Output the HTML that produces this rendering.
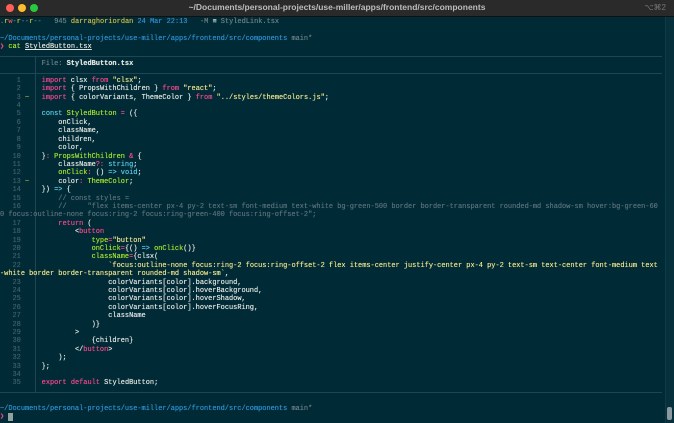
<!DOCTYPE html>
<html><head><meta charset="utf-8"><style>
html,body{margin:0;padding:0;background:#002b36;width:674px;height:423px;overflow:hidden}
#tb{position:absolute;left:0;top:0;width:674px;height:16px;background:#2a2a2a;border-bottom:1px solid #111}
.dot{position:absolute;top:4px;width:8px;height:8px;border-radius:50%}
#title{position:absolute;left:0;width:674px;top:2px;text-align:center;font:bold 8.5px "Liberation Sans",sans-serif;color:#bdbdbd}
#kb{position:absolute;right:8px;top:3px;font:8px "Liberation Sans","DejaVu Sans",sans-serif;color:#777}
pre{position:absolute;left:0;top:18px;margin:0;font-family:"Liberation Mono","DejaVu Sans Mono",monospace;font-size:6.95px;line-height:8.4px;color:#e2e6e2;white-space:pre;text-shadow:0 0 0.4px currentColor}
.hl{position:absolute;left:0;width:662px;height:1px;background:#1f4652}
.vl{position:absolute;left:35px;width:1px;background:#1f4652}
#sb{position:absolute;left:665px;top:17px;width:9px;height:406px;background:#06313c;border-left:1px solid #0e3a45}
#thumb{position:absolute;left:667px;top:407px;width:5px;height:13px;background:#8a9aa0;border-radius:2px}
.k{color:#f0468a}.s{color:#eee28a}.c{color:#5cc8e6}.g{color:#a6e22e}.cm{color:#587079}.n{color:#3d5d68}.m{color:#a8a830}
.b{color:#2f8fd0}.gr{color:#6b7f86}.y{color:#c9b640}.r{color:#e05050}
</style></head><body>
<div id="tb">
<div class="dot" style="left:6px;background:#fe5f57"></div>
<div class="dot" style="left:18px;background:#febc2e"></div>
<div class="dot" style="left:30px;background:#28c840"></div>
<div id="title">~/Documents/personal-projects/use-miller/apps/frontend/src/components</div>
<div id="kb">⌥⌘2</div>
</div>
<div id="sb"></div><div id="thumb"></div>
<div class="hl" style="top:56px"></div>
<div class="hl" style="top:73px"></div>
<div class="hl" style="top:392px"></div>
<div class="vl" style="top:57px;height:335px"></div>
<pre><span class="gr">.</span><span class="y">r</span><span class="r">w</span><span class="gr">-</span><span class="y">r</span><span class="gr">--</span><span class="y">r</span><span class="gr">--</span>   <span class="gr">945</span> <span class="y">darraghoriordan</span> <span class="b">24 Mar 22:13</span>   <span class="gr">-M</span> ≡ <span class="gr">StyledLink.tsx</span>

<span class="b">~/Documents/personal-projects/use-miller/apps/frontend/src/components</span> <span class="gr">main*</span>
<span class="k">❯</span> <span class="g">cat</span> <span style="text-decoration:underline">StyledButton.tsx</span>

          <span class="gr">File:</span> <b>StyledButton.tsx</b>

<span class="n">    1</span>     <span class="k">import</span> clsx <span class="k">from</span> <span class="s">"clsx"</span>;
<span class="n">    2</span>     <span class="k">import</span> { PropsWithChildren } <span class="k">from</span> <span class="s">"react"</span>;
<span class="n">    3</span> <span class="m">~</span>   <span class="k">import</span> { colorVariants, ThemeColor } <span class="k">from</span> <span class="s">"../styles/themeColors.js"</span>;
<span class="n">    4</span>
<span class="n">    5</span>     <span class="c">const</span> <span class="g">StyledButton</span> <span class="k">=</span> ({
<span class="n">    6</span>         onClick,
<span class="n">    7</span>         className,
<span class="n">    8</span>         children,
<span class="n">    9</span>         color,
<span class="n">   10</span>     }<span class="k">:</span> <span class="g">PropsWithChildren</span> <span class="k">&amp;</span> {
<span class="n">   11</span>         className<span class="k">?:</span> <span class="c">string</span>;
<span class="n">   12</span>         <span class="g">onClick</span><span class="k">:</span> () <span class="c">=&gt;</span> <span class="c">void</span>;
<span class="n">   13</span> <span class="m">~</span>       color<span class="k">:</span> <span class="g">ThemeColor</span>;
<span class="n">   14</span>     }) <span class="c">=&gt;</span> {
<span class="n">   15</span>         <span class="cm">// const styles =</span>
<span class="n">   16</span>         <span class="cm">//     "flex items-center px-4 py-2 text-sm font-medium text-white bg-green-500 border border-transparent rounded-md shadow-sm hover:bg-green-60</span>
<span class="cm">0 focus:outline-none focus:ring-2 focus:ring-green-400 focus:ring-offset-2";</span>
<span class="n">   17</span>         <span class="k">return</span> (
<span class="n">   18</span>             &lt;<span class="k">button</span>
<span class="n">   19</span>                 <span class="g">type</span><span class="k">=</span><span class="s">"button"</span>
<span class="n">   20</span>                 <span class="g">onClick</span><span class="k">=</span>{() <span class="c">=&gt;</span> <span class="g">onClick</span>()}
<span class="n">   21</span>                 <span class="g">className</span><span class="k">=</span>{clsx(
<span class="n">   22</span>                     <span class="s">`focus:outline-none focus:ring-2 focus:ring-offset-2 flex items-center justify-center px-4 py-2 text-sm text-center font-medium text</span>
<span class="s">-white border border-transparent rounded-md shadow-sm`</span>,
<span class="n">   23</span>                     colorVariants[color].background,
<span class="n">   24</span>                     colorVariants[color].hoverBackground,
<span class="n">   25</span>                     colorVariants[color].hoverShadow,
<span class="n">   26</span>                     colorVariants[color].hoverFocusRing,
<span class="n">   27</span>                     className
<span class="n">   28</span>                 )}
<span class="n">   29</span>             &gt;
<span class="n">   30</span>                 {children}
<span class="n">   31</span>             &lt;/<span class="k">button</span>&gt;
<span class="n">   32</span>         );
<span class="n">   33</span>     };
<span class="n">   34</span>
<span class="n">   35</span>     <span class="k">export</span> <span class="k">default</span> StyledButton;


<span class="b">~/Documents/personal-projects/use-miller/apps/frontend/src/components</span> <span class="gr">main*</span>
<span class="k">❯</span> <span style="background:#93a1a1">&nbsp;</span></pre>
</body></html>
